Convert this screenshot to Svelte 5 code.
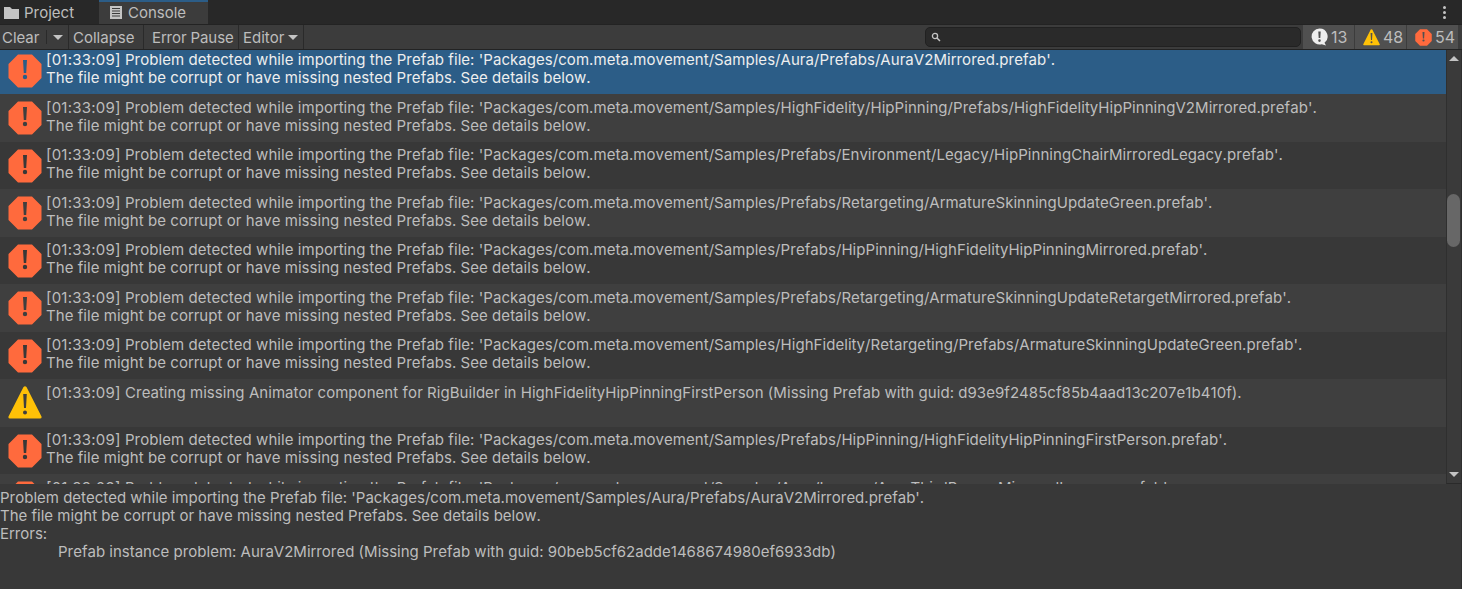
<script>
	const prefix = "Problem detected while importing the Prefab file: 'Packages/com.meta.movement/Samples/";
	const tail = 'The file might be corrupt or have missing nested Prefabs. See details below.';
	const rows = [
		{ kind: 'error', text: prefix + "Aura/Prefabs/AuraV2Mirrored.prefab'.", sub: tail, selected: true },
		{ kind: 'error', text: prefix + "HighFidelity/HipPinning/Prefabs/HighFidelityHipPinningV2Mirrored.prefab'.", sub: tail },
		{ kind: 'error', text: prefix + "Prefabs/Environment/Legacy/HipPinningChairMirroredLegacy.prefab'.", sub: tail },
		{ kind: 'error', text: prefix + "Prefabs/Retargeting/ArmatureSkinningUpdateGreen.prefab'.", sub: tail },
		{ kind: 'error', text: prefix + "Prefabs/HipPinning/HighFidelityHipPinningMirrored.prefab'.", sub: tail },
		{ kind: 'error', text: prefix + "Prefabs/Retargeting/ArmatureSkinningUpdateRetargetMirrored.prefab'.", sub: tail },
		{ kind: 'error', text: prefix + "HighFidelity/Retargeting/Prefabs/ArmatureSkinningUpdateGreen.prefab'.", sub: tail },
		{ kind: 'warn', text: 'Creating missing Animator component for RigBuilder in HighFidelityHipPinningFirstPerson (Missing Prefab with guid: d93e9f2485cf85b4aad13c207e1b410f).', sub: '' },
		{ kind: 'error', text: prefix + "Prefabs/HipPinning/HighFidelityHipPinningFirstPerson.prefab'.", sub: tail },
		{ kind: 'error', text: prefix + "Aura/Legacy/AuraThirdPersonMirroredLegacy.prefab'.", sub: tail }
	];
</script>

<!-- the exclamation marks are cut out so the row colour shows through -->
{#snippet octagon(size)}
	<svg width={size} height={size} viewBox="0 0 34 34">
		<path
			fill-rule="evenodd"
			fill="#ff6a3d"
			d="M10 0.5H24L33.5 10V24L24 33.5H10L0.5 24V10Z M15 6H19L18.2 19H15.8Z M17 20.8A2.2 2.2 0 1 0 17 25.2A2.2 2.2 0 1 0 17 20.8Z"
		/>
	</svg>
{/snippet}

{#snippet triangle(size)}
	<svg width={size} height={size} viewBox="0 0 34 34">
		<path
			fill-rule="evenodd"
			fill="#ffc107"
			d="M15.5 1Q17 -0.5 18.5 1L33.5 30.5Q34 32.5 32 32.5H2Q0 32.5 0.5 30.5Z M15.2 8H18.8L18 22H16Z M17 24.4A2 2 0 1 0 17 28.4A2 2 0 1 0 17 24.4Z"
		/>
	</svg>
{/snippet}

<div class="console">
	<div class="tabs">
		<div class="tab">
			<svg width="16" height="13" viewBox="0 0 16 13"><path d="M0 1H6L8 3H15V13H0Z" fill="#c4c4c4" /></svg>
			<span>Project</span>
		</div>
		<div class="tab active">
			<svg width="14" height="13" viewBox="0 0 14 13">
				<rect x="1" y="0" width="12" height="13" fill="#c4c4c4" />
				<path d="M3 2.5H11M3 5H11M3 7.5H11M3 10H11" stroke="#3c3c3c" stroke-width="1" />
			</svg>
			<span>Console</span>
		</div>
		<div class="kebab"><i></i><i></i><i></i></div>
	</div>

	<div class="toolbar">
		<div class="btn clear">Clear</div>
		<div class="btn drop"><span class="caret"></span></div>
		<div class="btn collapse">Collapse</div>
		<div class="btn pause">Error Pause</div>
		<div class="btn editor">Editor <span class="caret"></span></div>
		<div class="spacer">
			<div class="search">
				<svg width="10" height="10" viewBox="0 0 10 10"><circle cx="4" cy="4" r="2.6" fill="none" stroke="#c4c4c4" stroke-width="1.3" /><path d="M6 6L9 9" stroke="#c4c4c4" stroke-width="1.5" /></svg>
			</div>
		</div>
		<div class="counts">
			<div class="count">
				<svg width="17" height="18" viewBox="0 0 17 18">
					<path
						fill-rule="evenodd"
						fill="#eeeeee"
						d="M8.5 0.5A8 8 0 0 1 13.5 14.8L15 17.5L10.8 16.2A8 8 0 1 1 8.5 0.5Z M7.3 3.5H9.7L9.3 10H7.7Z M8.5 11.3A1.3 1.3 0 1 0 8.5 13.9A1.3 1.3 0 1 0 8.5 11.3Z"
					/>
				</svg>
				<span>13</span>
			</div>
			<div class="count">{@render triangle(17)}<span>48</span></div>
			<div class="count">{@render octagon(17)}<span>54</span></div>
		</div>
	</div>

	<div class="middle">
		<div class="list">
			<div class="rows">
				{#each rows as row, i}
					<div class="row" class:odd={i % 2 === 1} class:selected={row.selected}>
						<div class="icon">
							{#if row.kind === 'error'}{@render octagon(34)}{:else}{@render triangle(34)}{/if}
						</div>
						<div class="msg">
							<div><span class="time">[01:33:09]</span> {row.text}</div>
							<div>{row.sub}</div>
						</div>
					</div>
				{/each}
			</div>
		</div>
		<div class="scrollbar">
			<span class="arrow up"></span>
			<div class="track"><div class="thumb"></div></div>
			<span class="arrow down"></span>
		</div>
	</div>

	<div class="details">
		<div>Problem detected while importing the Prefab file: 'Packages/com.meta.movement/Samples/Aura/Prefabs/AuraV2Mirrored.prefab'.</div>
		<div>The file might be corrupt or have missing nested Prefabs. See details below.</div>
		<div>Errors:</div>
		<div class="indent">Prefab instance problem: AuraV2Mirrored (Missing Prefab with guid: 90beb5cf62adde1468674980ef6933db)</div>
	</div>
</div>

<style>
	:global(body) {
		background: #383838;
	}

	.console {
		height: 589px;
		overflow: hidden;
		display: flex;
		flex-direction: column;
		font-family: Inter, "Liberation Sans", sans-serif;
		font-size: 15px;
		font-kerning: none;
		color: #bdbdbd;
		background: #383838;
	}

	.tabs {
		height: 24px;
		flex: none;
		display: flex;
		background: #282828;
		box-sizing: border-box;
	}

	.tab {
		width: 99px;
		display: flex;
		align-items: center;
		gap: 4px;
		padding-left: 4px;
		box-sizing: border-box;
	}

	.tab.active {
		width: 109px;
		gap: 5px;
		padding: 0 0 2px 10px;
		background: #3c3c3c;
		border-top: 2px solid #2c5d87;
	}

	.kebab {
		margin-left: auto;
		width: 36px;
		display: flex;
		flex-direction: column;
		align-items: center;
		justify-content: center;
		gap: 2px;
	}

	.kebab i {
		width: 3px;
		height: 3px;
		border-radius: 50%;
		background: #c4c4c4;
	}

	.toolbar {
		height: 26px;
		flex: none;
		display: flex;
		background: #3c3c3c;
		border-top: 1px solid #232323;
		border-bottom: 1px solid #232323;
		box-sizing: border-box;
	}

	.btn {
		display: flex;
		align-items: center;
		gap: 4px;
		box-sizing: border-box;
		background: #3c3c3c;
		border-right: 1px solid #2a2a2a;
		white-space: nowrap;
	}

	.btn.clear {
		width: 46px;
		padding-left: 2px;
		border-right: 0;
	}

	.btn.drop {
		width: 23px;
		gap: 6px;
	}

	.btn.drop::before {
		content: '';
		width: 1px;
		height: 14px;
		background: #2a2a2a;
	}

	.btn.collapse {
		width: 75px;
		padding-left: 4px;
	}

	.btn.pause {
		width: 95px;
		padding-left: 8px;
		letter-spacing: -0.1px;
	}

	.btn.editor {
		width: 65px;
		padding-left: 4px;
	}

	.caret {
		width: 0;
		height: 0;
		border-left: 5px solid transparent;
		border-right: 5px solid transparent;
		border-top: 5px solid #c4c4c4;
	}

	.spacer {
		flex: 1;
		display: flex;
		justify-content: flex-end;
		align-items: center;
		padding-right: 2px;
	}

	.search {
		width: 376px;
		height: 20px;
		box-sizing: border-box;
		background: #2a2a2a;
		border: 1px solid #212121;
		border-radius: 5px;
		display: flex;
		align-items: center;
		padding-left: 5px;
	}

	.counts {
		display: flex;
		gap: 1px;
		padding-right: 4px;
		font-size: 16px;
	}

	.count {
		width: 51px;
		display: flex;
		align-items: center;
		gap: 3px;
		padding-left: 8px;
		background: #505050;
		box-sizing: border-box;
	}

	.middle {
		height: 434px;
		flex: none;
		display: flex;
	}

	.list {
		flex: 1;
		overflow: hidden;
	}

	.rows {
		margin-top: -3.5px;
	}

	.row {
		height: 47.5px;
		display: flex;
		background: #383838;
	}

	.row.odd {
		background: #3f3f3f;
	}

	.row.selected {
		background: #2c5d87;
		color: #eeeeee;
	}

	.icon {
		width: 46px;
		flex: none;
		padding: 7px 0 0 8px;
		box-sizing: border-box;
	}

	.msg {
		padding-top: 4.5px;
		line-height: 18px;
		letter-spacing: 0.05px;
		white-space: nowrap;
	}

	.time {
		letter-spacing: 0.22px;
	}

	.scrollbar {
		width: 16px;
		flex: none;
		background: #3a3a3a;
		border-left: 1px solid #2f2f2f;
		border-right: 1px solid #2f2f2f;
		border-bottom: 1px solid #2a2a2a;
		box-sizing: border-box;
		display: flex;
		flex-direction: column;
		align-items: center;
	}

	.track {
		flex: 1;
		width: 100%;
		padding-top: 127px;
		box-sizing: border-box;
	}

	.thumb {
		width: 13px;
		height: 53px;
		border-radius: 7px;
		background: #676767;
	}

	.arrow {
		flex: none;
		width: 0;
		height: 0;
		margin: 6px 0;
		border-left: 5px solid transparent;
		border-right: 5px solid transparent;
	}

	.arrow.up {
		border-bottom: 5px solid #c4c4c4;
	}

	.arrow.down {
		border-top: 5px solid #c4c4c4;
	}

	.details {
		flex: 1;
		padding-top: 5px;
		line-height: 18px;
		white-space: nowrap;
		background: #383838;
		border-right: 1px solid #2f2f2f;
	}

	.indent {
		padding-left: 58px;
	}
</style>
